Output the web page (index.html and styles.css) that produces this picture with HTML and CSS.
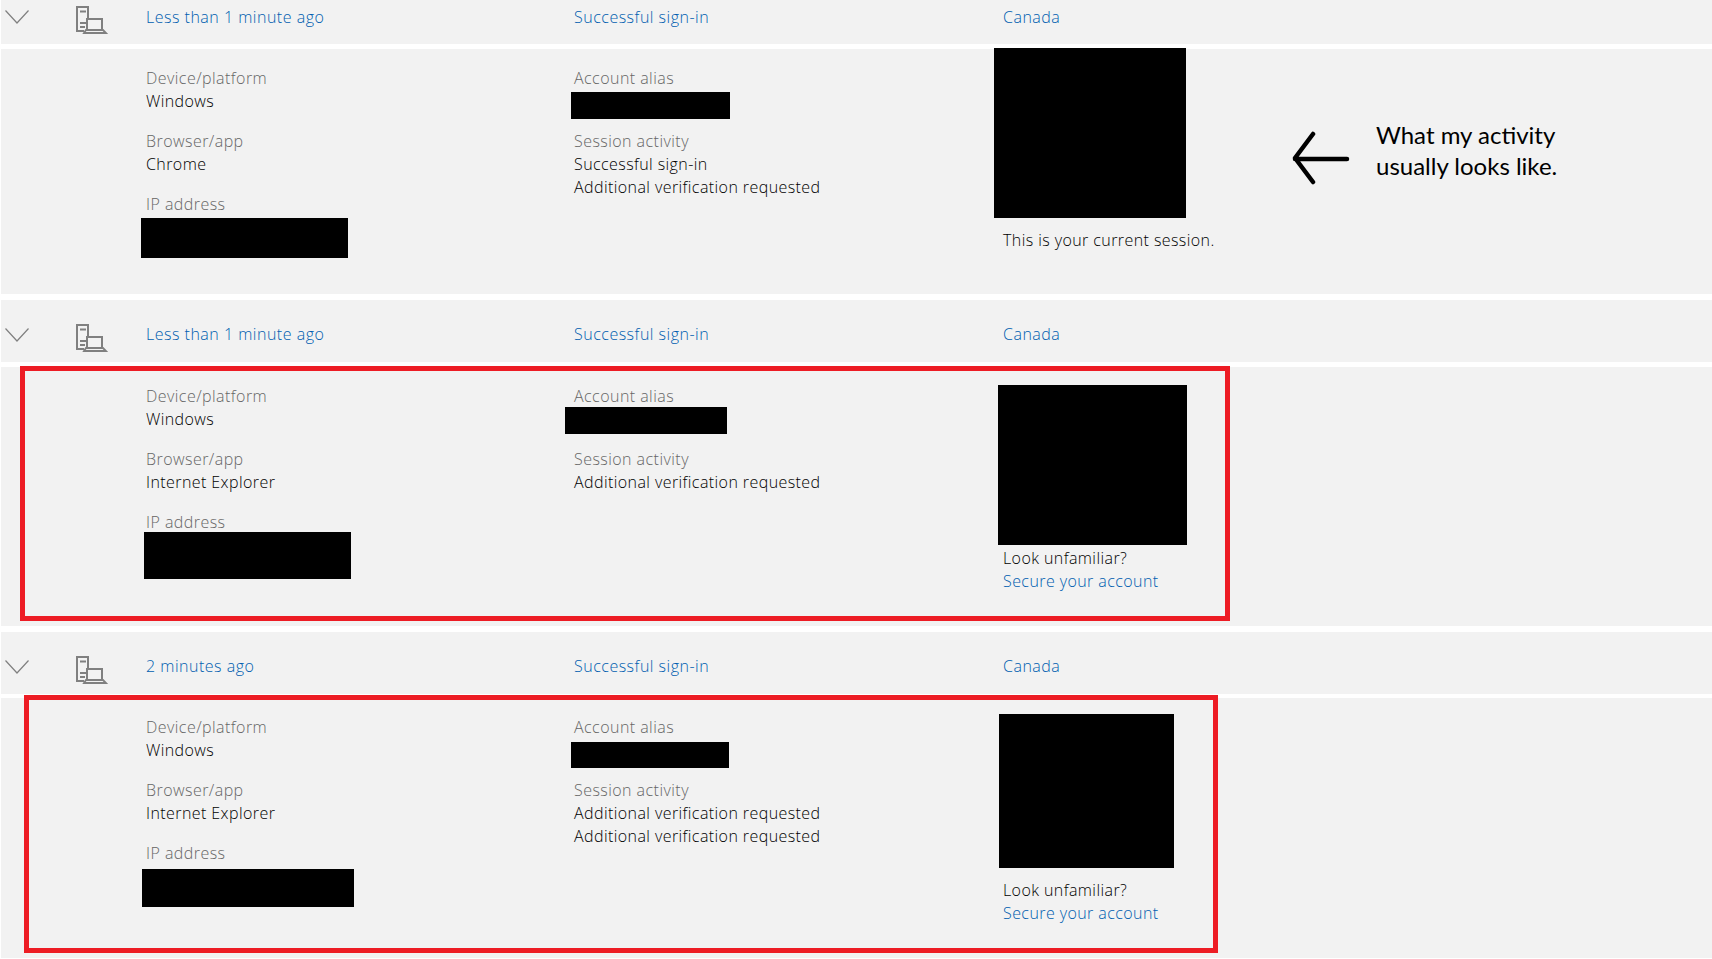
FILE: index.html
```html
<!DOCTYPE html>
<html lang="en">
<head>
    <meta charset="UTF-8">
    <title>Recent activity</title>
    <link rel="stylesheet" href="styles.css">
</head>
<body>
    <svg class="icon-defs" width="0" height="0">
        <symbol id="chevron" viewBox="0 0 24 14">
            <path d="M0.5 0.5L12 13L23.5 0.5" fill="none" stroke="#808080" stroke-width="1.2"/>
        </symbol>
        <symbol id="device" viewBox="0 0 34 30">
            <path d="M13 13V2H2V26H9" fill="none" stroke="#808080" stroke-width="2"/>
            <path d="M5 6.5H11M5 18H11M5 22H10" fill="none" stroke="#808080" stroke-width="1.8"/>
            <path d="M12 24V14H27V24" fill="none" stroke="#808080" stroke-width="2"/>
            <path d="M11 25H28L31 28H9Z" fill="none" stroke="#808080" stroke-width="1.8"/>
        </symbol>
    </svg>

    <!-- current session -->
    <div class="row row-first">
        <svg class="chevron"><use href="#chevron"/></svg>
        <svg class="device"><use href="#device"/></svg>
        <a class="link">Less than 1 minute ago</a>
        <a class="link">Successful sign-in</a>
        <a class="link">Canada</a>
    </div>
    <div class="detail detail-first">
        <div class="col">
            <div class="label">Device/platform</div>
            <div class="value">Windows</div>
            <div class="label">Browser/app</div>
            <div class="value">Chrome</div>
            <div class="label">IP address</div>
            <div class="redact ip-a"></div>
        </div>
        <div class="col">
            <div class="label">Account alias</div>
            <div class="redact alias-a"></div>
            <div class="label">Session activity</div>
            <div class="line">Successful sign-in</div>
            <div class="line">Additional verification requested</div>
        </div>
        <div class="col">
            <div class="redact map-a"></div>
            <div class="line">This is your current session.</div>
        </div>
        <svg class="arrow" width="60" height="56" viewBox="0 0 60 56">
            <path d="M22 3L4 27L22 51M4 28H56" fill="none" stroke="#000" stroke-width="4.5" stroke-linecap="round" stroke-linejoin="round"/>
        </svg>
        <div class="note">What my activity<br>usually looks like.</div>
    </div>

    <!-- second sign-in -->
    <div class="row">
        <svg class="chevron"><use href="#chevron"/></svg>
        <svg class="device"><use href="#device"/></svg>
        <a class="link">Less than 1 minute ago</a>
        <a class="link">Successful sign-in</a>
        <a class="link">Canada</a>
    </div>
    <div class="detail detail-second">
        <div class="col">
            <div class="label">Device/platform</div>
            <div class="value">Windows</div>
            <div class="label">Browser/app</div>
            <div class="value">Internet Explorer</div>
            <div class="label">IP address</div>
            <div class="redact ip-b"></div>
        </div>
        <div class="col">
            <div class="label">Account alias</div>
            <div class="redact alias-b"></div>
            <div class="label">Session activity</div>
            <div class="line">Additional verification requested</div>
        </div>
        <div class="col">
            <div class="redact map-b"></div>
            <div class="line">Look unfamiliar?</div>
            <a class="link line">Secure your account</a>
        </div>
        <div class="callout callout-b"></div>
    </div>

    <!-- third sign-in -->
    <div class="row row-tight">
        <svg class="chevron"><use href="#chevron"/></svg>
        <svg class="device"><use href="#device"/></svg>
        <a class="link">2 minutes ago</a>
        <a class="link">Successful sign-in</a>
        <a class="link">Canada</a>
    </div>
    <div class="detail detail-third">
        <div class="col">
            <div class="label">Device/platform</div>
            <div class="value">Windows</div>
            <div class="label">Browser/app</div>
            <div class="value">Internet Explorer</div>
            <div class="label">IP address</div>
            <div class="redact ip-c"></div>
        </div>
        <div class="col">
            <div class="label">Account alias</div>
            <div class="redact alias-c"></div>
            <div class="label">Session activity</div>
            <div class="line">Additional verification requested</div>
            <div class="line">Additional verification requested</div>
        </div>
        <div class="col">
            <div class="redact map-c"></div>
            <div class="line">Look unfamiliar?</div>
            <a class="link line">Secure your account</a>
        </div>
        <div class="callout callout-c"></div>
    </div>
</body>
</html>
```

FILE: styles.css
```css
html, body {
    height: 959px;
    overflow: hidden;
}
body {
    margin: 0;
    padding-left: 1px;
    background: #fff;
    font-family: "Open Sans", sans-serif;
    font-size: 16px;
    line-height: 23px;
    color: #000;
}
.icon-defs {
    position: absolute;
}

/* header rows */
.row {
    display: grid;
    grid-template-columns: 428px 429px 1fr;
    height: 62px;
    padding: 23px 0 0 145px;
    box-sizing: border-box;
    margin: 6px 0 5px;
    background: #f2f2f2;
    position: relative;
}
.row-first {
    margin-top: -18px;
    padding-top: 24px;
}
.row-tight {
    margin-bottom: 4px;
}
.chevron {
    position: absolute;
    left: 4px;
    top: 28px;
    width: 24px;
    height: 14px;
}
.device {
    position: absolute;
    left: 74px;
    top: 23px;
    width: 34px;
    height: 30px;
}
.link {
    color: #005eb0;
    font-weight: 300;
    letter-spacing: 0.5px;
}

/* expanded details */
.detail {
    display: grid;
    grid-template-columns: 428px 429px 1fr;
    padding: 18px 0 0 145px;
    box-sizing: border-box;
    background: #f2f2f2;
    position: relative;
}
.detail-first {
    height: 245px;
}
.detail-second {
    height: 259px;
}
.detail-third {
    height: 260px;
}
.col {
    min-width: 0;
}
.label {
    color: #666;
    font-weight: 300;
    letter-spacing: 0.45px;
}
.value, .line {
    display: block;
    font-weight: 300;
    letter-spacing: 0.42px;
}
.value {
    margin-bottom: 17px;
}
.link.line {
    letter-spacing: 0.42px;
}
.redact {
    background: #000;
    position: relative;
}

/* black boxes covering private values */
.ip-a { margin: 2px 0 0 -5px; width: 207px; height: 40px; }
.ip-b { margin: -2px 0 0 -2px; width: 207px; height: 47px; }
.ip-c { margin: 4px 0 0 -4px; width: 212px; height: 38px; }
.alias-a { margin: 2px 0 11px -3px; width: 159px; height: 27px; }
.alias-b { margin: -1px 0 14px -9px; width: 162px; height: 27px; }
.alias-c { margin: 3px 0 11px -3px; width: 158px; height: 26px; }
.map-a { margin: -19px 0 11px -9px; width: 192px; height: 170px; }
.map-b { margin: 0 0 2px -5px; width: 189px; height: 160px; }
.map-c { margin: -2px 0 11px -4px; width: 175px; height: 154px; }

/* drawn on top of the screenshot */
.callout {
    position: absolute;
    border: 5px solid #ed1c24;
    box-sizing: border-box;
}
.callout-b {
    left: 19px;
    top: -1px;
    width: 1210px;
    height: 255px;
}
.callout-c {
    left: 23px;
    top: -3px;
    width: 1194px;
    height: 258px;
}
.arrow {
    position: absolute;
    left: 1290px;
    top: 82px;
}
.note {
    position: absolute;
    left: 1375px;
    top: 70px;
    font-family: "Lato", sans-serif;
    font-size: 24px;
    line-height: 31px;
}
```
